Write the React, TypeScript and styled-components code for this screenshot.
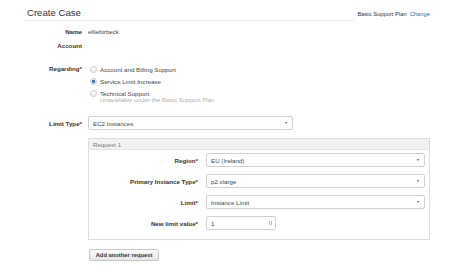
import React from "react";
import styled, { createGlobalStyle } from "styled-components";

const GlobalStyle = createGlobalStyle`
  html, body {
    margin: 0;
    padding: 0;
    background: #ffffff;
  }
  body {
    font-family: "Liberation Sans", Arial, sans-serif;
    font-size: 6.2px;
    color: #333333;
    -webkit-font-smoothing: antialiased;
  }
`;

const Page = styled.div`
  width: 474px;
  height: 268px;
  box-sizing: border-box;
  padding: 0 44px 0 25px;
  overflow: hidden;
`;

const Header = styled.div`
  display: flex;
  align-items: flex-end;
  height: 21px;
`;

const TitleBar = styled.div`
  flex: 1;
  height: 21px;
  box-sizing: border-box;
  border-bottom: 1px solid #ebebeb;
  display: flex;
  align-items: center;
  padding-left: 2px;
`;

const Title = styled.h1`
  margin: 0;
  font-size: 9.6px;
  font-weight: normal;
  color: #333;
  line-height: 1;
  padding-top: 6px;
`;

const Plan = styled.div`
  align-self: center;
  padding: 6px 0 0 3px;
  font-size: 5.8px;
  color: #333;
  white-space: nowrap;
`;

const PlanLink = styled.a`
  color: #2b6bbf;
  text-decoration: none;
  margin-left: 3px;
`;

const Row = styled.div<{ $mt: number; $align?: string }>`
  display: grid;
  grid-template-columns: 57px 1fr;
  column-gap: 6px;
  align-items: ${(p) => p.$align || "center"};
  margin-top: ${(p) => p.$mt}px;
  min-height: 10px;
`;

const Label = styled.div`
  text-align: right;
  font-weight: bold;
  color: #333;
  white-space: nowrap;
`;

const Value = styled.div`
  color: #444;
`;

const RadioGroup = styled.div`
  display: flex;
  flex-direction: column;
`;

const RadioItem = styled.label`
  display: grid;
  grid-template-columns: 9px 1fr;
  column-gap: 3px;
  align-items: center;
  height: 12px;
  color: #444;
`;

const RadioCircle = styled.span<{ $checked?: boolean }>`
  width: 7px;
  height: 7px;
  box-sizing: border-box;
  border-radius: 50%;
  border: 1px solid #c8c8c8;
  background: ${(p) =>
    p.$checked
      ? "radial-gradient(circle, #3b78d0 0 1.6px, #fff 2.1px)"
      : "linear-gradient(#fff, #f2f2f2)"};
  margin-left: 2px;
`;

const RadioNote = styled.div`
  color: #b0b0b0;
  margin: -3px 0 0 12px;
  line-height: 7px;
`;

const SelectBox = styled.div<{ $width?: number }>`
  position: relative;
  box-sizing: border-box;
  height: 14px;
  width: ${(p) => (p.$width ? `${p.$width}px` : "100%")};
  border: 1px solid #d0d0d0;
  border-radius: 2px;
  background: #fff;
  display: flex;
  align-items: center;
  padding-left: 4px;
  color: #444;
`;

const Arrow = styled.span`
  position: absolute;
  right: 5px;
  top: 5px;
  width: 0;
  height: 0;
  border-left: 1.5px solid transparent;
  border-right: 1.5px solid transparent;
  border-top: 2px solid #555;
`;

const Spinner = styled.span`
  position: absolute;
  right: 3px;
  top: 4px;
  width: 1px;
  height: 4px;
  border-left: 1px solid #bbb;
  border-right: 1px solid #bbb;
`;

const RequestBox = styled.div`
  margin-top: 8px;
  margin-left: 63px;
  border: 1px solid #dcdcdc;
`;

const RequestHeader = styled.div`
  height: 10px;
  background: #f2f2f2;
  border-bottom: 1px solid #e3e3e3;
  padding-left: 4px;
  display: flex;
  align-items: center;
  color: #777;
`;

const RequestBody = styled.div`
  display: flex;
  flex-direction: column;
  gap: 7px;
  padding: 3px 4px 9px 0;
`;

const RequestRow = styled.div`
  display: grid;
  grid-template-columns: 109px 1fr;
  column-gap: 8px;
  align-items: center;
`;

const Button = styled.button`
  margin: 9px 0 0 64px;
  height: 12px;
  width: 70px;
  padding: 0;
  border: 1px solid #c8c8c8;
  border-radius: 2px;
  background: linear-gradient(#fafafa, #e6e6e6);
  font-family: "Liberation Sans", Arial, sans-serif;
  font-size: 5.8px;
  font-weight: bold;
  color: #333;
`;

const requestFields = [
  { label: "Region*", value: "EU (Ireland)" },
  { label: "Primary Instance Type*", value: "p2.xlarge" },
  { label: "Limit*", value: "Instance Limit" },
];

export default function App() {
  return (
    <Page>
      <GlobalStyle />
      <Header>
        <TitleBar>
          <Title>Create Case</Title>
        </TitleBar>
        <Plan>
          Basic Support Plan<PlanLink href="#">Change</PlanLink>
        </Plan>
      </Header>

      <Row $mt={5}>
        <Label>Name</Label>
        <Value>elliebirbeck</Value>
      </Row>
      <Row $mt={4}>
        <Label>Account</Label>
        <Value />
      </Row>

      <Row $mt={13} $align="start">
        <Label style={{ lineHeight: "12px" }}>Regarding*</Label>
        <RadioGroup>
          <RadioItem>
            <RadioCircle />
            Account and Billing Support
          </RadioItem>
          <RadioItem>
            <RadioCircle $checked />
            Service Limit Increase
          </RadioItem>
          <RadioItem>
            <RadioCircle />
            Technical Support
          </RadioItem>
          <RadioNote>Unavailable under the Basic Support Plan</RadioNote>
        </RadioGroup>
      </Row>

      <Row $mt={13}>
        <Label>Limit Type*</Label>
        <SelectBox $width={205}>
          EC2 Instances
          <Arrow />
        </SelectBox>
      </Row>

      <RequestBox>
        <RequestHeader>Request 1</RequestHeader>
        <RequestBody>
          {requestFields.map((f) => (
            <RequestRow key={f.label}>
              <Label>{f.label}</Label>
              <SelectBox>
                {f.value}
                <Arrow />
              </SelectBox>
            </RequestRow>
          ))}
          <RequestRow>
            <Label>New limit value*</Label>
            <SelectBox $width={70}>
              1
              <Spinner />
            </SelectBox>
          </RequestRow>
        </RequestBody>
      </RequestBox>

      <Button>Add another request</Button>
    </Page>
  );
}
